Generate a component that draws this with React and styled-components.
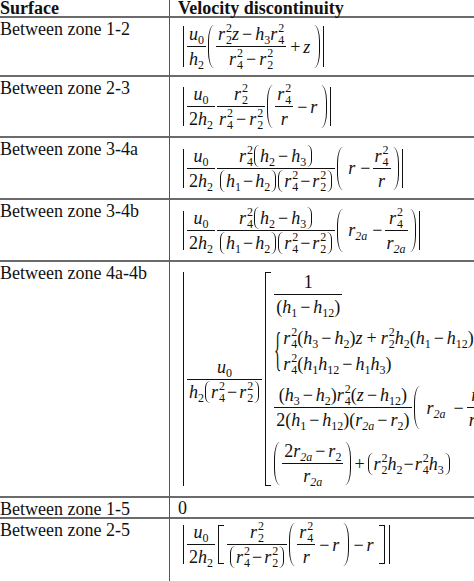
import React from 'react'
import styled, { createGlobalStyle } from 'styled-components'

const Global = createGlobalStyle`
  html, body { margin: 0; padding: 0; background: #fff; }
  body { width: 474px; height: 581px; overflow: hidden; }
  #root, #root * {
    font-family: "Liberation Serif", "Times New Roman", serif;
  }
`

const Table = styled.div`
  display: grid;
  grid-template-columns: 170px 900px;
  font-size: 18px;
  color: #111;
`

const Cell = styled.div`
  box-sizing: border-box;
  height: ${({ $h }) => $h}px;
  border-bottom: ${({ $last }) => ($last ? 'none' : '2px solid #6b6b6b')};
  border-right: ${({ $left }) => ($left ? '1.5px solid #555' : 'none')};
  padding: ${({ $left }) => ($left ? '1px 0 0 0' : '0 0 0 8px')};
  line-height: 20px;
  white-space: nowrap;
  display: ${({ $left }) => ($left ? 'block' : 'flex')};
  align-items: ${({ $top }) => ($top ? 'flex-start' : 'center')};
`

const Head = styled(Cell)`
  font-weight: bold;
  line-height: 16px;
  display: block;
  padding-top: 0;
  padding-left: ${({ $left }) => ($left ? 0 : 8)}px;
`

const Formula = styled.span`
  display: inline-flex;
  align-items: center;
  line-height: 20px;
  padding-left: 3px;
  margin-top: ${({ $mt }) => $mt || 0}px;
`

const Group = styled.span`
  display: inline-flex;
  align-items: center;
`

const Col = styled.span`
  display: inline-flex;
  flex-direction: column;
  align-items: flex-start;
  gap: ${({ $gap }) => $gap || 0}px;
`

const SymBox = styled.span`
  display: inline-flex;
  align-items: flex-start;
  height: 20px;
  line-height: 20px;
`

const V = styled.span`
  font-style: italic;
  margin-right: ${({ $mr }) => $mr || 0}px;
`

const Scripts = styled.span`
  display: inline-flex;
  flex-direction: column;
  gap: 2px;
  font-size: 12px;
  line-height: 10px;
  margin: -1px 0 0 1px;
  font-style: ${({ $it }) => ($it ? 'italic' : 'normal')};
`

const Sub = styled.span`
  font-size: 12px;
  line-height: 10px;
  margin: 11px 0 0 0;
  font-style: ${({ $it }) => ($it ? 'italic' : 'normal')};
`

const Op = styled.span`
  margin: 0 ${({ $m }) => ($m === undefined ? 3 : $m)}px;
`

const Frac = styled.span`
  display: inline-flex;
  flex-direction: column;
  align-items: center;
  margin: 0 1px;
`

const Num = styled.span`
  display: flex;
  align-items: flex-end;
  justify-content: center;
  padding: 0 2px 2px;
  border-bottom: 1px solid #111;
  width: 100%;
  box-sizing: border-box;
`

const Den = styled.span`
  display: flex;
  align-items: flex-start;
  justify-content: center;
  padding: 2px 2px 0;
`

const Paren = styled.span`
  align-self: stretch;
  width: ${({ $w }) => $w || 5}px;
  margin: ${({ $my }) => ($my === undefined ? 1 : $my)}px 1px;
  border-${({ $r }) => ($r ? 'right' : 'left')}: 1.3px solid #111;
  border-radius: ${({ $r }) => ($r ? '0 8px 8px 0 / 0 50% 50% 0' : '8px 0 0 8px / 50% 0 0 50%')};
`

const Bracket = styled.span`
  align-self: stretch;
  width: 5px;
  margin: ${({ $my }) => $my || 0}px 2px;
  border: 1.3px solid #111;
  border-${({ $r }) => ($r ? 'left' : 'right')}: none;
`

const Bar = styled.span`
  align-self: stretch;
  width: 0;
  margin: ${({ $my }) => $my || 0}px 2px;
  border-left: 1.3px solid #111;
`

const Brace = styled.span`
  display: inline-block;
  font-size: 19px;
  transform: scaleY(2.4) scaleX(0.8);
  margin-right: 1px;
`

const Sym = ({ v, p, b, ita }) => (
  <SymBox>
    <V>{v}</V>
    {p ? (
      <Scripts $it={ita}>
        <span>{p}</span>
        <span>{b}</span>
      </Scripts>
    ) : b ? (
      <Sub $it={ita}>{b}</Sub>
    ) : null}
  </SymBox>
)

const F = ({ n, d }) => (
  <Frac>
    <Num>{n}</Num>
    <Den>{d}</Den>
  </Frac>
)

const P = ({ children, my }) => (
  <Group>
    <Paren $my={my} />
    {children}
    <Paren $r $my={my} />
  </Group>
)

const SmallP = ({ children }) => (
  <Group>
    <Paren $w={4} $my={-1} />
    {children}
    <Paren $r $w={4} $my={-1} />
  </Group>
)

const U0 = () => <Sym v="u" b="0" />
const H = ({ b }) => <Sym v="h" b={b} />
const R2a = () => <Sym v="r" b="2a" ita />
const r4s = <Sym v="r" p="2" b="4" />
const r2s = <Sym v="r" p="2" b="2" />
const twoH2 = <>2<H b="2" /></>

const h1h2 = (
  <SmallP>
    <H b="1" />
    <Op $m={2}>−</Op>
    <H b="2" />
  </SmallP>
)
const r4mr2 = (
  <SmallP>
    {r4s}
    <Op $m={2}>−</Op>
    {r2s}
  </SmallP>
)
const h1h12 = (
  <>
    <span>(</span>
    <H b="1" />
    <Op>−</Op>
    <H b="12" />
    <span>)</span>
  </>
)

const Row34 = ({ last }) => (
  <Formula>
    <Bar $my={3} />
    <F n={<U0 />} d={twoH2} />
    <F
      n={
        <>
          {r4s}
          <SmallP>
            <H b="2" />
            <Op>−</Op>
            <H b="3" />
          </SmallP>
        </>
      }
      d={
        <>
          {h1h2}
          {r4mr2}
        </>
      }
    />
    <P>
      <Op $m={4}>{last ? <R2a /> : <V>r</V>}</Op>
      <Op $m={1}>−</Op>
      <F n={r4s} d={last ? <R2a /> : <V>r</V>} />
    </P>
    <Bar $my={3} />
  </Formula>
)

export default function App() {
  return (
    <>
      <Global />
      <Table>
        <Head $h={18} $left>Surface</Head>
        <Head $h={18}>Velocity discontinuity</Head>

        <Cell $h={59} $left>Between zone 1-2</Cell>
        <Cell $h={59}>
          <Formula>
            <Bar $my={2} />
            <F n={<U0 />} d={<H b="2" />} />
            <P>
              <F
                n={
                  <>
                    {r2s}
                    <V>z</V>
                    <Op>−</Op>
                    <H b="3" />
                    {r4s}
                  </>
                }
                d={
                  <>
                    {r4s}
                    <Op>−</Op>
                    {r2s}
                  </>
                }
              />
              <Op>+</Op>
              <V $mr={3}>z</V>
            </P>
            <Bar $my={2} />
          </Formula>
        </Cell>

        <Cell $h={61} $left>Between zone 2-3</Cell>
        <Cell $h={61}>
          <Formula>
            <Bar $my={3} />
            <F n={<U0 />} d={twoH2} />
            <F n={r2s} d={<>{r4s}<Op>−</Op>{r2s}</>} />
            <P>
              <F n={r4s} d={<V>r</V>} />
              <Op>−</Op>
              <V $mr={3}>r</V>
            </P>
            <Bar $my={3} />
          </Formula>
        </Cell>

        <Cell $h={62} $left>Between zone 3-4a</Cell>
        <Cell $h={62}>
          <Row34 />
        </Cell>

        <Cell $h={62} $left>Between zone 3-4b</Cell>
        <Cell $h={62}>
          <Row34 last />
        </Cell>

        <Cell $h={236} $left>Between zone 4a-4b</Cell>
        <Cell $h={236}>
          <Formula>
            <Bar />
            <F n={<U0 />} d={<><H b="2" />{r4mr2}</>} />
            <Bracket />
            <Col $gap={11}>
              <F n="1" d={h1h12} />
              <Group>
                <Brace>{'{'}</Brace>
                <Col $gap={6}>
                  <Group>
                    {r4s}
                    <span>(</span><H b="3" /><Op>−</Op><H b="2" /><span>)</span>
                    <V>z</V>
                    <Op $m={4}>+</Op>
                    {r2s}
                    <H b="2" />
                    {h1h12}
                  </Group>
                  <Group>
                    {r4s}
                    <span>(</span><H b="1" /><H b="12" /><Op>−</Op><H b="1" /><H b="3" /><span>)</span>
                  </Group>
                </Col>
              </Group>
              <Group>
                <F
                  n={
                    <>
                      <span>(</span><H b="3" /><Op>−</Op><H b="2" /><span>)</span>
                      {r4s}
                      <span>(</span><V>z</V><Op>−</Op><H b="12" /><span>)</span>
                    </>
                  }
                  d={
                    <>
                      2{h1h12}
                      <span>(</span><R2a /><Op>−</Op><Sym v="r" b="2" /><span>)</span>
                    </>
                  }
                />
                <P>
                  <Op $m={6}><R2a /></Op>
                  <Op $m={2}>−</Op>
                  <F n={r4s} d={<R2a />} />
                </P>
              </Group>
              <Group>
                <P>
                  <F n={<>2<R2a /><Op>−</Op><Sym v="r" b="2" /></>} d={<R2a />} />
                </P>
                <Op $m={2}>+</Op>
                <SmallP>
                  {r2s}
                  <H b="2" />
                  <Op $m={1}>−</Op>
                  {r4s}
                  <H b="3" />
                </SmallP>
              </Group>
            </Col>
          </Formula>
        </Cell>

        <Cell $h={21} $left>Between zone 1-5</Cell>
        <Cell $h={21}>0</Cell>

        <Cell $h={70} $left $last>Between zone 2-5</Cell>
        <Cell $h={70} $last $top>
          <Formula $mt={3}>
            <Bar $my={3} />
            <F n={<U0 />} d={twoH2} />
            <Bracket $my={3} />
            <F n={r2s} d={r4mr2} />
            <P>
              <F n={r4s} d={<V>r</V>} />
              <Op>−</Op>
              <V $mr={3}>r</V>
            </P>
            <Op>−</Op>
            <V $mr={3}>r</V>
            <Bracket $r $my={3} />
            <Bar $my={3} />
          </Formula>
        </Cell>
      </Table>
    </>
  )
}
